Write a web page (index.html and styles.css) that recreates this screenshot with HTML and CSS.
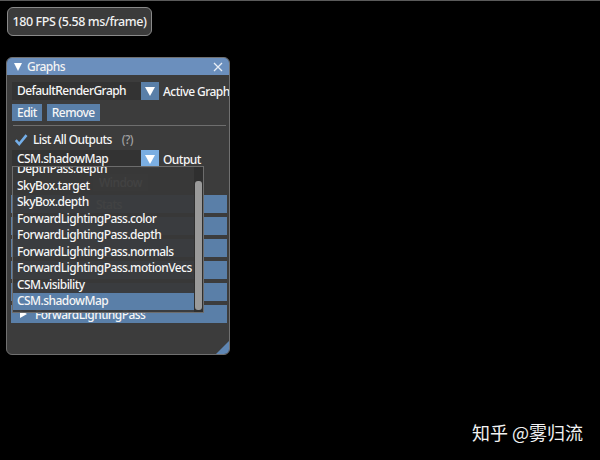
FILE: index.html
```html
<!DOCTYPE html>
<html>
<head>
<meta charset="utf-8">
<link rel="stylesheet" href="styles.css">
</head>
<body>
<div class="topline"></div>
<div class="fps">180 FPS (5.58 ms/frame)</div>
<div class="win">
  <div class="title">
    <span class="tri"></span><span class="title-text">Graphs</span>
    <svg class="close" width="10" height="10" viewBox="0 0 10 10"><path d="M1 1L9 9M9 1L1 9" stroke="#e8eef6" stroke-width="1.3"/></svg>
  </div>
  <div class="body">
    <div class="row">
      <div class="combo">DefaultRenderGraph</div>
      <div class="arrow"><span class="dn"></span></div>
      <span class="lbl">Active Graph</span>
    </div>
    <div class="row btns">
      <div class="btn">Edit</div>
      <div class="btn">Remove</div>
    </div>
    <div class="sep"></div>
    <div class="row check-row">
      <svg class="check" width="14" height="14" viewBox="0 0 14 14"><path d="M1.8 7.2L5.2 11L12.5 2.2" stroke="#74aee8" stroke-width="2.6" fill="none"/></svg>
      <span class="lbl">List All Outputs</span>
      <span class="help">(?)</span>
    </div>
    <div class="row">
      <div class="combo">CSM.shadowMap</div>
      <div class="arrow hover"><span class="dn"></span></div>
      <span class="lbl">Output</span>
    </div>
    <div class="row under">
      <div class="ghost-btn">Window</div>
    </div>
    <div class="headers">
      <div class="hdr"><span class="stats">Stats</span></div>
      <div class="hdr"></div>
      <div class="hdr"></div>
      <div class="hdr"></div>
      <div class="hdr"></div>
      <div class="hdr"><span class="htri"></span>ForwardLightingPass</div>
    </div>
    <div class="grip"></div>
  </div>
</div>
<div class="popup">
  <div class="list">
    <div class="items">
      <div class="item">DepthPass.depth</div>
      <div class="item">SkyBox.target</div>
      <div class="item">SkyBox.depth</div>
      <div class="item">ForwardLightingPass.color</div>
      <div class="item">ForwardLightingPass.depth</div>
      <div class="item">ForwardLightingPass.normals</div>
      <div class="item">ForwardLightingPass.motionVecs</div>
      <div class="item">CSM.visibility</div>
      <div class="item sel">CSM.shadowMap</div>
    </div>
  </div>
  <div class="sbar"><div class="grab"></div></div>
</div>
<div class="mark">知乎 @雾归流</div>
</body>
</html>
```
FILE: styles.css
```css
html, body {
  margin: 0;
  padding: 0;
}
body {
  background: #000;
  width: 600px;
  height: 460px;
  overflow: hidden;
  position: relative;
  font-family: "Noto Sans", "Open Sans", sans-serif;
  font-size: 12px;
  font-weight: 500;
  letter-spacing: -0.55px;
  color: #f6f6f6;
}
.topline {
  height: 1px;
  background: #5a5a5a;
}
.fps {
  margin: 6px 0 0 7px;
  width: 143px;
  height: 27px;
  border: 1px solid #8a8a8a;
  border-radius: 6px;
  background: #3b3b3b;
  display: flex;
  align-items: center;
  justify-content: center;
  font-size: 12.5px;
  letter-spacing: -0.4px;
  color: #f2f2f2;
}
.win {
  margin: 21px 0 0 6px;
  width: 222px;
  height: 296px;
  border: 1px solid #707070;
  border-radius: 6px;
  background: #3c3c3c;
  overflow: hidden;
  display: flex;
  flex-direction: column;
}
.title {
  height: 17px;
  background: #6b8fbd;
  display: flex;
  align-items: center;
  padding: 0 6px 0 7px;
  flex: none;
}
.tri {
  width: 0;
  height: 0;
  border-left: 4.5px solid transparent;
  border-right: 4.5px solid transparent;
  border-top: 8px solid #fff;
  margin-right: 5px;
}
.title-text {
  flex: 1;
  color: #f4f4f4;
}
.body {
  flex: 1;
  padding: 7px 0 0 5px;
  position: relative;
}
.row {
  display: flex;
  align-items: center;
  height: 18px;
  white-space: nowrap;
}
.combo {
  flex: none;
  width: 124px;
  height: 18px;
  background: #333333;
  padding-left: 5px;
  line-height: 18px;
}
.arrow {
  flex: none;
  width: 18px;
  height: 18px;
  background: #5a7fa8;
  display: flex;
  align-items: center;
  justify-content: center;
}
.arrow.hover {
  background: #7aaee2;
}
.dn {
  width: 0;
  height: 0;
  border-left: 5px solid transparent;
  border-right: 5px solid transparent;
  border-top: 9px solid #fff;
}
.lbl {
  margin-left: 4px;
}
.btns {
  margin-top: 4px;
  height: 17px;
  gap: 5px;
}
.btn {
  flex: none;
  height: 17px;
  line-height: 17px;
  padding: 0 5px;
  background: #5a7fa8;
}
.sep {
  margin: 4px 3px 0 1px;
  height: 1px;
  background: #6e6e6e;
}
.check-row {
  margin-top: 5px;
  height: 17px;
}
.check {
  flex: none;
  margin-left: 2px;
}
.check-row .lbl {
  margin-left: 5px;
}
.help {
  margin-left: 10px;
  color: #a0a0a0;
}
.check-row + .row {
  margin-top: 2px;
}
.under {
  margin-top: 6px;
  height: 17px;
}
.ghost-btn {
  margin-left: 81px;
  height: 17px;
  line-height: 17px;
  padding: 0 6px;
  background: #4a4a4a;
  color: #d8d8d8;
}
.headers {
  margin: 4px 0 0 -1px;
  width: 216px;
  display: flex;
  flex-direction: column;
  gap: 4px;
}
.hdr {
  height: 18px;
  background: #5a7fa8;
  padding-left: 9px;
  white-space: nowrap;
  display: flex;
  align-items: center;
}
.stats {
  margin-left: 76px;
  color: #cfd8e2;
}
.htri {
  width: 0;
  height: 0;
  border-top: 4px solid transparent;
  border-bottom: 4px solid transparent;
  border-left: 7px solid #fff;
  margin-right: 8px;
}
.grip {
  position: absolute;
  right: 0;
  bottom: 0;
  width: 0;
  height: 0;
  border-left: 13px solid transparent;
  border-bottom: 13px solid #5f86b3;
}
.popup {
  position: absolute;
  left: 12px;
  top: 166px;
  width: 190px;
  height: 145px;
  border: 1px solid #6c6c6c;
  background: rgba(56, 56, 56, 0.94);
  display: flex;
}
.list {
  flex: 1;
  overflow: hidden;
  position: relative;
}
.items {
  margin-top: -6px;
}
.item {
  height: 16.5px;
  line-height: 16.5px;
  padding-left: 4px;
  white-space: nowrap;
}
.item.sel {
  background: #5a7fa8;
}
.sbar {
  width: 9px;
  background: #2f2f2f;
  padding: 14px 1px 2px 1px;
  box-sizing: border-box;
  display: flex;
}
.grab {
  flex: 1;
  background: #9a9a9a;
  border-radius: 3px;
}
.mark {
  position: absolute;
  left: 472px;
  top: 419px;
  font-family: "Noto Sans CJK SC", sans-serif;
  font-size: 18px;
  font-weight: 400;
  letter-spacing: 0;
  color: #f2f2f2;
}
```
